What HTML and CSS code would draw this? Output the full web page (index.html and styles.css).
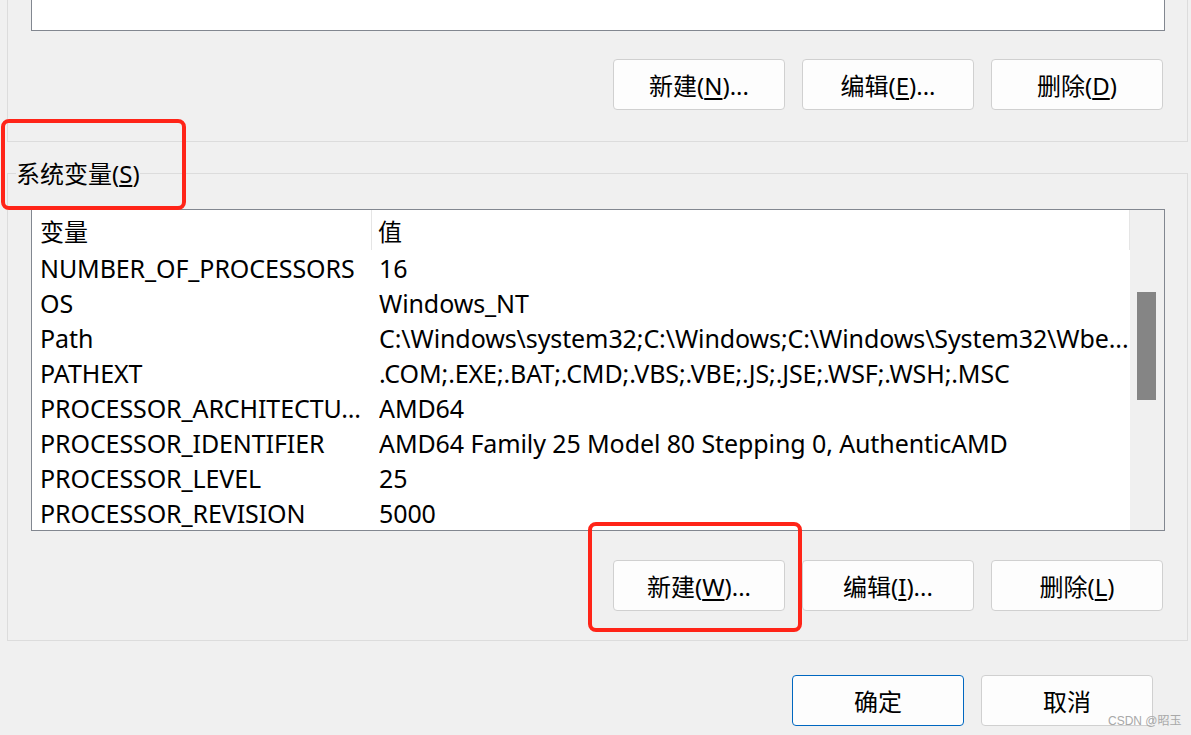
FILE: index.html
```html
<!DOCTYPE html>
<html lang="zh-CN">
<head>
<meta charset="utf-8">
<title>环境变量</title>
<link rel="stylesheet" href="styles.css">
</head>
<body>
<div class="dialog">
  <section class="group group-user">
    <div class="list-stub"></div>
    <div class="btn-row">
      <button class="btn">新建(<u>N</u>)...</button>
      <button class="btn">编辑(<u>E</u>)...</button>
      <button class="btn">删除(<u>D</u>)</button>
    </div>
  </section>

  <section class="group group-sys">
    <span class="group-label">系统变量(<u>S</u>)</span>
    <div class="listbox">
      <div class="list-main">
        <div class="list-header">
          <div class="hcell hcell-name">变量</div>
          <div class="hcell hcell-value">值</div>
        </div>
        <div class="row"><div class="cell name">NUMBER_OF_PROCESSORS</div><div class="cell value">16</div></div>
        <div class="row"><div class="cell name">OS</div><div class="cell value">Windows_NT</div></div>
        <div class="row"><div class="cell name">Path</div><div class="cell value">C:\Windows\system32;C:\Windows;C:\Windows\System32\Wbe...</div></div>
        <div class="row"><div class="cell name">PATHEXT</div><div class="cell value">.COM;.EXE;.BAT;.CMD;.VBS;.VBE;.JS;.JSE;.WSF;.WSH;.MSC</div></div>
        <div class="row"><div class="cell name">PROCESSOR_ARCHITECTU...</div><div class="cell value">AMD64</div></div>
        <div class="row"><div class="cell name">PROCESSOR_IDENTIFIER</div><div class="cell value">AMD64 Family 25 Model 80 Stepping 0, AuthenticAMD</div></div>
        <div class="row"><div class="cell name">PROCESSOR_LEVEL</div><div class="cell value">25</div></div>
        <div class="row"><div class="cell name">PROCESSOR_REVISION</div><div class="cell value">5000</div></div>
      </div>
      <div class="scrollbar"><div class="thumb"></div></div>
    </div>
    <div class="btn-row btn-row-sys">
      <button class="btn">新建(<u>W</u>)...</button>
      <button class="btn">编辑(<u>I</u>)...</button>
      <button class="btn">删除(<u>L</u>)</button>
    </div>
  </section>

  <footer class="footer">
    <button class="btn btn-default">确定</button>
    <button class="btn">取消</button>
  </footer>

  <div class="mark mark-label"></div>
  <div class="mark mark-new"></div>
  <div class="watermark">CSDN @昭玉</div>
</div>
</body>
</html>
```

FILE: styles.css
```css
html, body {
  margin: 0;
  padding: 0;
  background: #f0f0f0;
}

body {
  font-family: "Noto Sans", "Noto Sans CJK SC", sans-serif;
  color: #000;
}

.dialog {
  position: relative;
  width: 1191px;
  height: 735px;
  overflow: hidden;
  display: flex;
  flex-direction: column;
}

.group {
  margin-left: 7px;
  width: 1179px;
  border: 1px solid #dcdcdc;
  box-sizing: content-box;
}

.group-user {
  border-top: none;
  height: 141px;
}

.group-sys {
  position: relative;
  margin-top: 31px;
  height: 466px;
}

.group-label {
  position: absolute;
  left: 8px;
  top: -17px;
  background: #f0f0f0;
  font-size: 24px;
  line-height: 34px;
  font-family: "Noto Sans", "Noto Sans CJK SC", sans-serif;
}

.list-stub {
  margin-left: 23px;
  width: 1132px;
  height: 30px;
  background: #fff;
  border: 1px solid #828790;
  border-top: none;
}

.btn-row {
  display: flex;
  justify-content: flex-end;
  gap: 17px;
  padding-right: 24px;
  margin-top: 28px;
}

.btn-row-sys {
  margin-top: 29px;
}

.btn {
  width: 172px;
  height: 51px;
  background: #fdfdfd;
  border: 1px solid #d0d0d0;
  border-radius: 4px;
  font-family: "Noto Sans", "Noto Sans CJK SC", sans-serif;
  font-size: 24px;
  color: #000;
  padding: 0;
  margin: 0;
}

.btn u {
  text-underline-offset: 3px;
}

.btn-default {
  border-color: #0067c0;
}

.listbox {
  margin-left: 23px;
  margin-top: 35px;
  width: 1132px;
  height: 320px;
  border: 1px solid #828790;
  background: #fff;
  display: flex;
  overflow: hidden;
}

.list-main {
  flex: 1;
  display: flex;
  flex-direction: column;
  overflow: hidden;
}

.list-header {
  display: flex;
  height: 40px;
  flex-shrink: 0;
  border-right: 1px solid #e5e5e5;
}

.hcell {
  display: flex;
  align-items: center;
  font-size: 24px;
}

.hcell-name {
  width: 331px;
  padding-left: 8px;
  border-right: 1px solid #e5e5e5;
}

.hcell-value {
  padding-left: 6px;
}

.row {
  display: flex;
  height: 35px;
  flex-shrink: 0;
  align-items: center;
  font-size: 25px;
  letter-spacing: -0.1px;
  white-space: nowrap;
}

.cell.name {
  width: 347px;
  padding-left: 8px;
  box-sizing: border-box;
  flex-shrink: 0;
  overflow: hidden;
}

.cell.value {
  flex: 1;
  overflow: hidden;
}

.scrollbar {
  width: 34px;
  flex-shrink: 0;
  background: #f0f0f0;
}

.thumb {
  margin-top: 82px;
  margin-left: 7px;
  width: 19px;
  height: 108px;
  background: #858585;
}

.footer {
  display: flex;
  justify-content: flex-end;
  gap: 17px;
  padding-right: 38px;
  margin-top: 34px;
}

.mark {
  position: absolute;
  border: 4px solid #ff2418;
  border-radius: 8px;
  box-sizing: border-box;
}

.mark-label {
  left: 1px;
  top: 119px;
  width: 185px;
  height: 91px;
}

.mark-new {
  left: 588px;
  top: 522px;
  width: 214px;
  height: 110px;
}

.watermark {
  position: absolute;
  left: 1108px;
  top: 711px;
  font-family: "Liberation Sans", "Noto Sans CJK SC", sans-serif;
  font-size: 12px;
  color: #a8a8a8;
  white-space: nowrap;
}
```
